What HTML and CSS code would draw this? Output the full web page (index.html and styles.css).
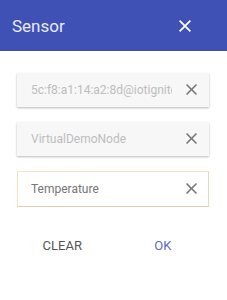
FILE: index.html
```html
<!DOCTYPE html>
<html>
<head>
<meta charset="utf-8">
<link rel="stylesheet" href="styles.css">
</head>
<body>
<div class="dialog">
  <header class="bar">
    <span class="title">Sensor</span>
    <svg class="bar-close" viewBox="5 5 14 14" width="12" height="12"><path fill="#fff" d="M19 6.41L17.59 5 12 10.59 6.41 5 5 6.41 10.59 12 5 17.59 6.41 19 12 13.41 17.59 19 19 17.59 13.41 12z"/></svg>
  </header>
  <div class="fields">
    <div class="field disabled">
      <span class="value">5c:f8:a1:14:a2:8d@iotignite</span>
      <svg class="clear" viewBox="5 5 14 14" width="11" height="11"><path fill="#757575" d="M19 6.41L17.59 5 12 10.59 6.41 5 5 6.41 10.59 12 5 17.59 6.41 19 12 13.41 17.59 19 19 17.59 13.41 12z"/></svg>
    </div>
    <div class="field disabled">
      <span class="value">VirtualDemoNode</span>
      <svg class="clear" viewBox="5 5 14 14" width="11" height="11"><path fill="#757575" d="M19 6.41L17.59 5 12 10.59 6.41 5 5 6.41 10.59 12 5 17.59 6.41 19 12 13.41 17.59 19 19 17.59 13.41 12z"/></svg>
    </div>
    <div class="field active">
      <span class="value">Temperature</span>
      <svg class="clear" viewBox="5 5 14 14" width="11" height="11"><path fill="#757575" d="M19 6.41L17.59 5 12 10.59 6.41 5 5 6.41 10.59 12 5 17.59 6.41 19 12 13.41 17.59 19 19 17.59 13.41 12z"/></svg>
    </div>
  </div>
  <div class="actions">
    <button class="btn btn-clear">CLEAR</button>
    <button class="btn btn-ok">OK</button>
  </div>
</div>
</body>
</html>
```
FILE: styles.css
```css
html, body {
  margin: 0;
  padding: 0;
  background: #fff;
}
body {
  font-family: Roboto, "Liberation Sans", sans-serif;
  width: 227px;
  height: 300px;
  overflow: hidden;
}
.dialog {
  display: flex;
  flex-direction: column;
}
.bar {
  height: 51px;
  background: #3f51b5;
  display: flex;
  align-items: center;
  padding: 0 36px 0 12px;
  justify-content: space-between;
}
.title {
  color: #e8eaf6;
  font-size: 17px;
  line-height: 20px;
  margin-top: 1px;
}
.bar-close {
  display: block;
  margin-top: 1px;
}
.fields {
  display: flex;
  flex-direction: column;
  gap: 15px;
  padding: 22px 18px 0 17px;
}
.field {
  height: 34px;
  box-sizing: border-box;
  display: flex;
  align-items: center;
  justify-content: space-between;
  padding: 0 12px 0 14px;
  font-size: 12px;
}
.field.disabled {
  background: #f7f7f7;
  box-shadow: 0 1px 2px rgba(0,0,0,0.28);
  color: #bdbdbd;
}
.field.active {
  height: 36px;
  background: #fff;
  border: 1px solid #fbe0c6;
  border-bottom-color: #e6cdb1;
  border-right-color: #efd6bc;
  color: #757575;
  padding-left: 13px;
  padding-right: 11px;
}
.value {
  white-space: nowrap;
  overflow: hidden;
  width: 141px;
  margin-top: -1px;
}
.clear {
  display: block;
  margin-top: -2px;
  flex: none;
}
.actions {
  display: flex;
  gap: 10px;
  padding: 20px 19px 0 17px;
}
.btn {
  flex: 1;
  background: none;
  border: none;
  font-family: Roboto, "Liberation Sans", sans-serif;
  font-size: 13px;
  height: 36px;
  padding: 0;
}
.btn-clear {
  color: #555;
}
.btn-ok {
  color: #5c6bc0;
}
```
